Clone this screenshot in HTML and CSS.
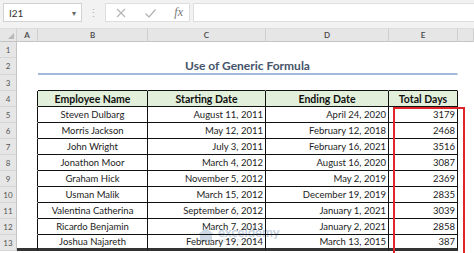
FILE: index.html
```html
<!DOCTYPE html>
<html lang="en">
<head>
    <meta charset="UTF-8">
    <title>Use of Generic Formula</title>
    <link rel="stylesheet" href="styles.css">
</head>
<body>
    <div class="toolbar">
        <div class="name-box">
            <span>I21</span>
            <span class="nb-arrow">&#9662;</span>
        </div>
        <div class="grip">&#8942;</div>
        <div class="fx-box">
            <svg class="fx-icon" width="12" height="12" viewBox="0 0 12 12"><path d="M2 2 L10 10 M10 2 L2 10" stroke="#b5b5b5" stroke-width="1.2" fill="none"/></svg>
            <svg class="fx-icon" width="13" height="12" viewBox="0 0 13 12"><path d="M1.5 6.5 L5 10 L11.5 2.5" stroke="#b5b5b5" stroke-width="1.3" fill="none"/></svg>
            <span class="fx-text">fx</span>
        </div>
        <div class="formula-input"></div>
    </div>

    <div class="sheet-wrap">
        <div class="watermark">
            <svg width="20" height="16" viewBox="0 0 20 16"><path d="M1 8 L10 1 L19 8 L16 8 L16 15 L4 15 L4 8 Z" fill="#9fb3cc"/></svg>
            <div class="wm-text">
                <span class="wm-name">exceldemy</span>
                <span class="wm-sub">EXCEL · DATA · BI</span>
            </div>
        </div>

        <table class="sheet">
            <colgroup>
                <col class="c-rh"><col class="c-a"><col class="c-b"><col class="c-c"><col class="c-d"><col class="c-e"><col class="c-f">
            </colgroup>
            <thead>
                <tr class="col-head">
                    <th class="corner"><span class="corner-tri"></span></th>
                    <th>A</th><th>B</th><th>C</th><th>D</th><th>E</th><th></th>
                </tr>
            </thead>
            <tbody>
                <tr><th>1</th><td></td><td></td><td></td><td></td><td></td><td></td></tr>
                <tr class="title-row"><th>2</th><td></td><td colspan="4" class="title">Use of Generic Formula</td><td></td></tr>
                <tr class="pre-table"><th>3</th><td></td><td></td><td></td><td></td><td></td><td></td></tr>
                <tr class="t-head"><th>4</th><td class="edge"></td><td>Employee Name</td><td>Starting Date</td><td>Ending Date</td><td>Total Days</td><td></td></tr>
                <tr class="t-row"><th>5</th><td class="edge"></td><td class="name">Steven Dulbarg</td><td>August 11, 2011</td><td>April 24, 2020</td><td>3179</td><td></td></tr>
                <tr class="t-row"><th>6</th><td class="edge"></td><td class="name">Morris Jackson</td><td>May 12, 2011</td><td>February 12, 2018</td><td>2468</td><td></td></tr>
                <tr class="t-row"><th>7</th><td class="edge"></td><td class="name">John Wright</td><td>July 3, 2011</td><td>February 16, 2021</td><td>3516</td><td></td></tr>
                <tr class="t-row"><th>8</th><td class="edge"></td><td class="name">Jonathon Moor</td><td>March 4, 2012</td><td>August 16, 2020</td><td>3087</td><td></td></tr>
                <tr class="t-row"><th>9</th><td class="edge"></td><td class="name">Graham Hick</td><td>November 5, 2012</td><td>May 2, 2019</td><td>2369</td><td></td></tr>
                <tr class="t-row"><th>10</th><td class="edge"></td><td class="name">Usman Malik</td><td>March 15, 2012</td><td>December 19, 2019</td><td>2835</td><td></td></tr>
                <tr class="t-row"><th>11</th><td class="edge"></td><td class="name">Valentina Catherina</td><td>September 6, 2012</td><td>January 1, 2021</td><td>3039</td><td></td></tr>
                <tr class="t-row"><th>12</th><td class="edge"></td><td class="name">Ricardo Benjamin</td><td>March 7, 2013</td><td>January 2, 2021</td><td>2858</td><td></td></tr>
                <tr class="t-row last"><th>13</th><td class="edge"></td><td class="name">Joshua Najareth</td><td>February 19, 2014</td><td>March 13, 2015</td><td>387</td><td></td></tr>
            </tbody>
        </table>

        <div class="highlight"></div>
    </div>
</body>
</html>
```

FILE: styles.css
```css
* { margin: 0; padding: 0; box-sizing: border-box; }
body { width: 474px; height: 253px; overflow: hidden; background: #fff; font-family: 'Lato', 'Liberation Sans', sans-serif; color: #222; }

/* formula bar */
.toolbar { height: 29px; background: #f2f2f2; display: flex; align-items: flex-start; padding-top: 3px; border-bottom: 1px solid #dcdcdc; }
.name-box { width: 79px; height: 19px; margin-left: 3px; background: #fff; border: 1px solid #d2d2d2; display: flex; align-items: center; justify-content: space-between; padding: 0 5px 0 5px; font-size: 10px; color: #333; }
.nb-arrow { font-size: 8px; color: #666; }
.grip { width: 23px; text-align: center; color: #b0b0b0; font-size: 11px; line-height: 19px; }
.fx-box { width: 85px; height: 19px; background: #fff; border: 1px solid #dedede; display: flex; align-items: center; justify-content: space-between; padding: 0 6px 0 9px; }
.fx-text { font-family: 'Liberation Serif', serif; font-style: italic; font-size: 12px; color: #777; }
.formula-input { flex: 1; height: 19px; margin-left: 3px; background: #fff; border: 1px solid #dedede; border-right: none; }

/* grid */
.sheet-wrap { position: relative; }
.sheet { position: relative; border-collapse: separate; border-spacing: 0; table-layout: fixed; width: 474px; }
.c-rh { width: 17px; } .c-a { width: 21px; } .c-b { width: 110px; } .c-c { width: 118px; } .c-d { width: 123px; } .c-e { width: 69px; } .c-f { width: 16px; }
.sheet td, .sheet th { padding: 0; border-right: 1px solid transparent; border-bottom: 1px solid transparent; white-space: nowrap; overflow: hidden; }
.sheet tr { height: 16px; }
.col-head { height: 13px !important; }
.col-head th { background: #e6e6e6; font-size: 8px; font-weight: 600; color: #444; border-bottom: 1px solid #c4c4c4; border-right: 1px solid #cfcfcf; }
.corner { position: relative; }
.corner-tri { position: absolute; right: 2px; bottom: 2px; width: 0; height: 0; border-left: 6px solid transparent; border-bottom: 6px solid #b8b8b8; }
tbody th { background: #e6e6e6; font-size: 8px; font-weight: 400; color: #555; border-right: 1px solid #c4c4c4 !important; border-bottom: 1px solid #d6d6d6 !important; }

.title { text-align: center; font-weight: 700; font-size: 12px; color: #44546a; border-bottom: 2px solid #a4b8db !important; }

.pre-table td:nth-child(n+3):nth-child(-n+6) { border-bottom-color: #111; }
.t-head td.edge, .t-row td.edge { border-right-color: #111; }
.t-head td:nth-child(n+3):nth-child(-n+6), .t-row td:nth-child(n+3):nth-child(-n+6) { border-right-color: #111; border-bottom-color: #111; font-size: 9.5px; }
.t-head td:nth-child(n+3):nth-child(-n+6) { background: #e2efda; font-weight: 700; font-size: 10.5px; text-align: center; color: #111; }
.t-row td:nth-child(n+4):nth-child(-n+6) { text-align: right; padding-right: 2px; }
.t-row td.name { text-align: center; }
.t-row.last td:nth-child(n+2):nth-child(-n+6) { border-bottom: 3px solid #333; }
.t-row.last td.edge { border-bottom-color: transparent; }

.highlight { position: absolute; left: 393px; top: 78px; width: 72px; height: 150px; border: 2px solid #e0242a; pointer-events: none; }

/* faint watermark behind the sheet text */
.watermark { position: absolute; left: 196px; top: 197px; display: flex; align-items: center; gap: 2px; opacity: 0.5; }
.wm-text { display: flex; flex-direction: column; line-height: 1; }
.wm-name { font-size: 13px; font-weight: 700; color: #8aa3c3; }
.wm-sub { font-size: 4px; color: #9bb0c8; letter-spacing: 0.5px; }
```
